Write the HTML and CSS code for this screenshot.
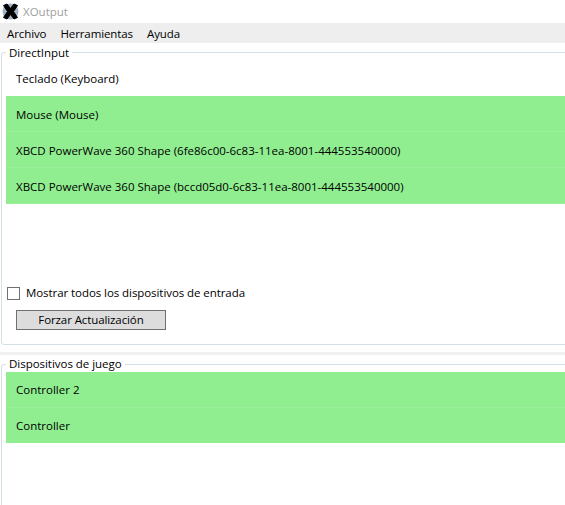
FILE: index.html
```html
<!DOCTYPE html>
<html lang="es">
<head>
<meta charset="utf-8">
<title>XOutput</title>
<link rel="stylesheet" href="styles.css">
</head>
<body>
<div class="window">
  <header class="titlebar">
    <svg class="logo" width="17" height="17" viewBox="0 0 17 17"><circle cx="8.5" cy="8.5" r="8" fill="#a4b2c4"/><path d="M1.5 2.5 L5 1 L8.5 5.5 L12 1 L15.5 2.5 L11.5 8.5 L15.5 14.5 L12 16 L8.5 11.5 L5 16 L1.5 14.5 L5.5 8.5 Z" fill="#000" stroke="#000" stroke-width="1" stroke-linejoin="round"/></svg>
    <span class="app-title">XOutput</span>
  </header>
  <nav class="menu">
    <span class="menu-item">Archivo</span>
    <span class="menu-item">Herramientas</span>
    <span class="menu-item">Ayuda</span>
  </nav>
  <fieldset class="group group-input">
    <legend>DirectInput</legend>
    <div class="list">
      <div class="row">Teclado (Keyboard)</div>
      <div class="row active">Mouse (Mouse)</div>
      <div class="row active">XBCD PowerWave 360 Shape (6fe86c00-6c83-11ea-8001-444553540000)</div>
      <div class="row active">XBCD PowerWave 360 Shape (bccd05d0-6c83-11ea-8001-444553540000)</div>
    </div>
    <label class="check"><span class="box"></span><span class="check-text">Mostrar todos los dispositivos de entrada</span></label>
    <button class="btn" type="button">Forzar Actualización</button>
  </fieldset>
  <div class="splitter"></div>
  <fieldset class="group group-games">
    <legend>Dispositivos de juego</legend>
    <div class="list">
      <div class="row active">Controller 2</div>
      <div class="row active">Controller</div>
    </div>
  </fieldset>
</div>
</body>
</html>
```
FILE: styles.css
```css
html, body {
  margin: 0;
  padding: 0;
  background: #fff;
}
body {
  font-family: "Open Sans", "Noto Sans", sans-serif;
  font-size: 11.5px;
  color: #000;
}
.window {
  width: 565px;
  height: 505px;
  overflow: hidden;
}
.titlebar {
  height: 23px;
  display: flex;
  align-items: center;
  gap: 4px;
  padding-left: 2px;
}
.logo { flex: none; }
.app-title {
  color: #a0a0a0;
}
.menu {
  height: 20px;
  background: #eeeeee;
  display: flex;
  align-items: center;
  gap: 14px;
  padding-left: 7px;
  letter-spacing: -0.1px;
}
.group {
  margin: 0 -20px 0 1px;
  padding: 0 0 0 4px;
  border: 1px solid #d5dfe5;
  border-radius: 3px;
  min-width: 0;
}
.group legend {
  margin-left: 0;
  padding: 0 3px;
  line-height: 18px;
  height: 16px;
  letter-spacing: -0.03px;
}
.group-input {
  margin-top: 1px;
  height: 301px;
  box-sizing: border-box;
}
.group-games {
  height: 170px;
  box-sizing: border-box;
}
.group-games legend {
  line-height: 16px;
}
.group-input .list {
  height: 226px;
}
.row {
  height: 35px;
  margin-bottom: 1px;
  display: flex;
  align-items: center;
  padding: 1px 0 0 10px;
  box-sizing: border-box;
  white-space: nowrap;
}
.group-games .row {
  padding-top: 0;
}
.row.active {
  background: #90ee90;
  box-shadow: 0 1px 0 #9cef9c;
}
.group-games .row:last-child {
  box-shadow: none;
}
.check {
  display: flex;
  align-items: center;
  gap: 6px;
  margin-left: 1px;
  height: 14px;
}
.check-text {
  padding-bottom: 2px;
  letter-spacing: -0.07px;
}
.box {
  width: 11px;
  height: 11px;
  border: 1px solid #707070;
  background: #fff;
  flex: none;
}
.btn {
  display: block;
  width: 150px;
  height: 20px;
  margin: 10px 0 0 10px;
  padding: 0 0 1px;
  font: inherit;
  letter-spacing: -0.1px;
  color: #000;
  background: #dddddd;
  border: 1px solid #707070;
  border-radius: 0;
}
.splitter {
  height: 3px;
  margin: 7px 0 1px;
  background: #f0f0f0;
}
```
